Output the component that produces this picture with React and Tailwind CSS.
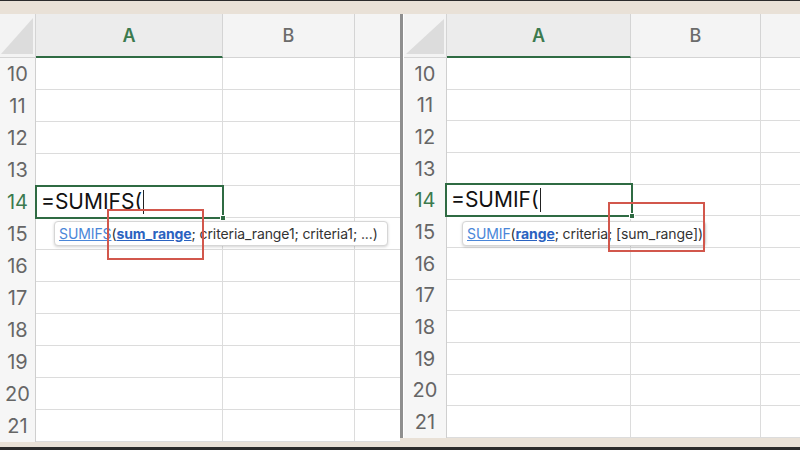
import React from "react";

const ROWS = [10, 11, 12, 13, 14, 15, 16, 17, 18, 19, 20, 21];

function Pane({ c, formula, tip, leftBorder }) {
  return (
    <div
      className={`relative bg-white flex flex-col font-['Inter','Liberation_Sans',Arial,sans-serif] ${
        leftBorder ? "border-l-[3px] border-[#8f8f8f] pl-px" : ""
      }`}
    >
      {/* header row */}
      <div className="flex">
        <div className={`${c.rh} h-[44px] shrink-0 bg-[#f3f3f3] border-r border-b border-[#d4d4d4] flex items-end justify-end pb-[3px] pr-[2px]`}>
          <svg className={c.tri} viewBox="0 0 34 36" preserveAspectRatio="none">
            <polygon points="0,36 34,0 34,36" fill="#dcdcdc" />
          </svg>
        </div>
        <div className={`${c.a} h-[44px] bg-[#ececec] border-r border-[#d4d4d4] border-b-2 border-b-[#2f6b43] flex items-center justify-center text-[18px] font-semibold text-[#3c7a4e]`}>
          A
        </div>
        <div className={`${c.b} h-[44px] bg-[#f4f4f4] border-r border-b border-[#d4d4d4] flex items-center justify-center text-[18px] font-medium text-[#6b6b6b]`}>
          B
        </div>
        <div className={`${c.c} h-[44px] bg-[#f4f4f4] border-b border-[#d4d4d4]`} />
      </div>
      {ROWS.map((r) => (
        <div key={r} className={`flex ${c.row}`}>
          <div
            className={`${c.rh} shrink-0 bg-[#f6f6f6] border-r border-[#cfcfcf] flex items-center justify-center text-[20px] ${
              r === 14 ? "text-[#3c7a4e]" : "text-[#666666]"
            }`}
          >
            {r}
          </div>
          <div className={`${c.a} border-r border-b border-[#dcdcdc]`} />
          <div className={`${c.b} border-r border-b border-[#dcdcdc]`} />
          <div className={`${c.c} border-b border-[#dcdcdc]`} />
        </div>
      ))}

      {/* active cell */}
      <div className={`absolute ${c.active} h-[34px] border-2 border-[#2f6b43] bg-white flex items-center pl-[4px] text-[21px] text-[#111]`}>
        <span>{formula}</span>
        <span className="ml-px w-px h-[24px] bg-[#222]" />
        <span className="absolute right-[-4px] bottom-[-4px] w-[6px] h-[6px] bg-[#2f6b43] border border-white" />
      </div>

      {/* tooltip */}
      <div className={`absolute ${c.tip} h-[25px] bg-white border border-[#d6d6d6] rounded-[4px] shadow-[0_1px_3px_rgba(0,0,0,0.18)] flex items-center pl-[4px] text-[14px] text-[#333] whitespace-nowrap tracking-[-0.1px]`}>
        {tip}
      </div>

      {/* red highlight */}
      <div className={`absolute ${c.red} border-2 border-[#d2574c]`} />
    </div>
  );
}

export default function App() {
  const leftTip = (
    <>
      <span className="text-[#4a86d8] underline">SUMIFS</span>
      <span>(</span>
      <span className="text-[#2a62c0] font-bold underline">sum_range</span>
      <span>; criteria_range1; criteria1; ...)</span>
    </>
  );
  const rightTip = (
    <>
      <span className="text-[#4a86d8] underline">SUMIF</span>
      <span>(</span>
      <span className="text-[#2a62c0] font-bold underline">range</span>
      <span>; criteria; [sum_range])</span>
    </>
  );
  const leftC = {
    rh: "w-[36px]",
    tri: "w-[32px] h-[36px]",
    a: "w-[187px]",
    b: "w-[132px]",
    c: "w-[45px]",
    row: "h-[32px]",
    active: "left-[35px] top-[171px] w-[189px]",
    tip: "left-[54px] top-[207px] w-[334px]",
    red: "left-[107px] top-[195px] w-[97px] h-[51px]",
  };
  const rightC = {
    rh: "w-[43px]",
    tri: "w-[38px] h-[35px]",
    a: "w-[184px]",
    b: "w-[130px]",
    c: "w-[39px]",
    row: "h-[31.67px]",
    active: "left-[42px] top-[169px] w-[188px]",
    tip: "left-[59px] top-[207px] w-[244px]",
    red: "left-[205px] top-[188px] w-[97px] h-[50px]",
  };
  return (
    <div className="w-[800px] h-[450px] overflow-hidden bg-[#e9e1d7] border-t border-b-[3px] border-[#2b2b2b] flex flex-col">
      <div className="h-[13px] shrink-0" />
      <div className="flex items-start">
        <div className="w-[400px] overflow-hidden">
          <Pane c={leftC} formula="=SUMIFS(" tip={leftTip} />
        </div>
        <div className="w-[400px] overflow-hidden">
          <Pane c={rightC} formula="=SUMIF(" tip={rightTip} leftBorder />
        </div>
      </div>
    </div>
  );
}
